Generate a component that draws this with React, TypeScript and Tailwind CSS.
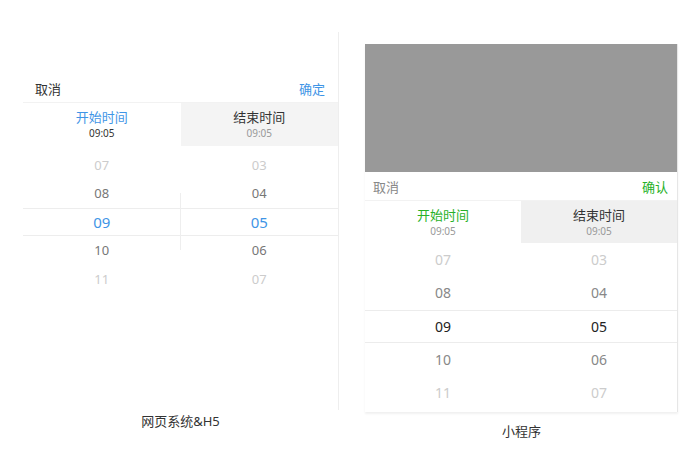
import React from "react";

const font = { fontFamily: '"Noto Sans", "Noto Sans CJK SC", sans-serif' };

type Row = { text: string; tone: "faint" | "mid" | "active" };

const leftA: Row[] = [
  { text: "07", tone: "faint" },
  { text: "08", tone: "mid" },
  { text: "09", tone: "active" },
  { text: "10", tone: "mid" },
  { text: "11", tone: "faint" },
];
const leftB: Row[] = [
  { text: "03", tone: "faint" },
  { text: "04", tone: "mid" },
  { text: "05", tone: "active" },
  { text: "06", tone: "mid" },
  { text: "07", tone: "faint" },
];

// Web / H5 picker
const WebPicker = () => {
  const tone = (t: Row["tone"]) =>
    t === "active"
      ? "text-[15px] text-[#3f95e6]"
      : t === "mid"
      ? "text-[13px] text-[#777]"
      : "text-[13px] text-[#ccc]";

  const col = (rows: Row[]) => (
    <div className="flex-1 flex flex-col">
      {rows.map((r, i) => (
        <div key={i} className={`h-[28.5px] flex items-center justify-center ${tone(r.tone)}`}>
          {r.text}
        </div>
      ))}
    </div>
  );

  return (
    <div className="w-[315px] ml-[23px] flex flex-col">
      <div className="h-[75px]" />
      <div className="h-[28px] flex items-center justify-between pl-[12px] pr-[13px] pt-[2px] border-b border-[#f2f2f2] text-[13px]">
        <span className="text-[#333]">取消</span>
        <span className="text-[#3f95e6]">确定</span>
      </div>
      <div className="h-[43px] flex">
        <div className="flex-1 flex flex-col items-center justify-center bg-white">
          <span className="text-[13px] leading-[15px] text-[#3f95e6]">开始时间</span>
          <span className="text-[10px] leading-[12px] mt-[2px] text-[#333]">09:05</span>
        </div>
        <div className="flex-1 flex flex-col items-center justify-center bg-[#f4f4f4]">
          <span className="text-[13px] leading-[15px] text-[#333]">结束时间</span>
          <span className="text-[10px] leading-[12px] mt-[2px] text-[#999]">09:05</span>
        </div>
      </div>
      <div className="relative pt-[5px] flex">
        {col(leftA)}
        {col(leftB)}
        <div className="absolute left-0 right-0 top-[62px] h-[28px] border-y border-[#ededed]" />
        <div className="absolute left-[157px] top-[47px] h-[57px] w-px bg-[#eeeeee]" />
      </div>
      <div className="mt-auto mb-[20px] text-center text-[13px] text-[#333]">网页系统&amp;H5</div>
    </div>
  );
};

// Mini program picker
const MiniPicker = () => {
  const tone = (t: Row["tone"]) =>
    t === "active" ? "text-[#222]" : t === "mid" ? "text-[#888]" : "text-[#ccc]";

  const col = (rows: Row[]) => (
    <div className="flex-1 flex flex-col">
      {rows.map((r, i) => (
        <div key={i} className={`h-[33.3px] flex items-center justify-center text-[14px] ${tone(r.tone)}`}>
          {r.text}
        </div>
      ))}
    </div>
  );

  return (
    <div className="w-[313px] flex flex-col">
      <div className="h-[44px]" />
      <div className="border-r border-[#e6e6e6] shadow-[0_2px_2px_rgba(0,0,0,0.06)] bg-white">
        <div className="h-[128px] bg-[#999999]" />
        <div className="h-[29px] flex items-center justify-between pl-[8px] pr-[9px] pt-[3px] border-b border-[#f2f2f2] text-[13px]">
          <span className="text-[#888]">取消</span>
          <span className="text-[#28b128]">确认</span>
        </div>
        <div className="h-[42px] flex">
          <div className="flex-1 flex flex-col items-center justify-center bg-white">
            <span className="text-[13px] leading-[15px] text-[#28b128]">开始时间</span>
            <span className="text-[10px] leading-[12px] mt-[2px] text-[#999]">09:05</span>
          </div>
          <div className="flex-1 flex flex-col items-center justify-center bg-[#f0f0f0]">
            <span className="text-[13px] leading-[15px] text-[#333]">结束时间</span>
            <span className="text-[10px] leading-[12px] mt-[2px] text-[#999]">09:05</span>
          </div>
        </div>
        <div className="relative flex pb-[3px]">
          {col(leftA)}
          {col(leftB)}
          <div className="absolute left-0 right-0 top-[66.6px] h-[33.3px] border-y border-[#ececec]" />
        </div>
      </div>
      <div className="mt-[10px] text-center text-[13px] text-[#333]">小程序</div>
    </div>
  );
};

export default function App() {
  return (
    <div className="w-[696px] h-[451px] bg-white flex" style={font}>
      <WebPicker />
      <div className="mt-[32px] h-[378px] w-px bg-[#eeeeee]" />
      <div className="w-[26px]" />
      <MiniPicker />
    </div>
  );
}
